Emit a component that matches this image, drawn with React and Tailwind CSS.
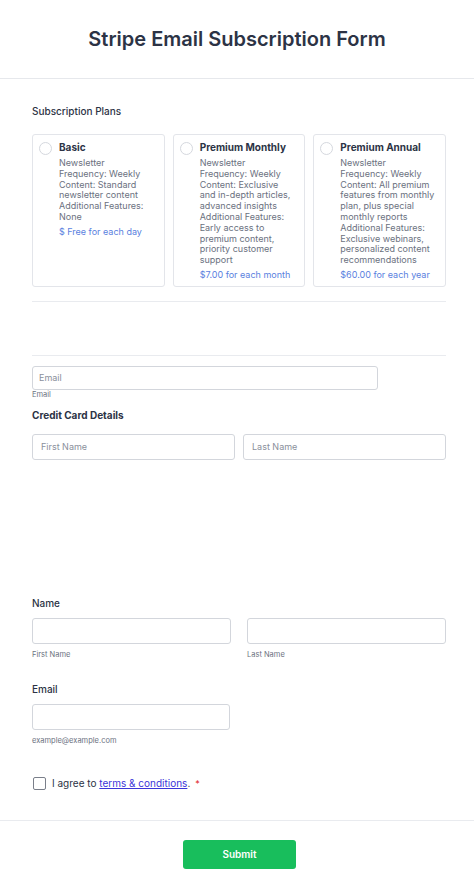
const plans = [
  {
    name: "Basic",
    lines: [
      "Newsletter",
      "Frequency: Weekly",
      "Content: Standard",
      "newsletter content",
      "Additional Features:",
      "None",
    ],
    price: "$ Free for each day",
  },
  {
    name: "Premium Monthly",
    lines: [
      "Newsletter",
      "Frequency: Weekly",
      "Content: Exclusive",
      "and in-depth articles,",
      "advanced insights",
      "Additional Features:",
      "Early access to",
      "premium content,",
      "priority customer",
      "support",
    ],
    price: "$7.00 for each month",
  },
  {
    name: "Premium Annual",
    lines: [
      "Newsletter",
      "Frequency: Weekly",
      "Content: All premium",
      "features from monthly",
      "plan, plus special",
      "monthly reports",
      "Additional Features:",
      "Exclusive webinars,",
      "personalized content",
      "recommendations",
    ],
    price: "$60.00 for each year",
  },
];

function PlanCard({ plan }) {
  return (
    <label className="flex gap-[7px] border border-[#e3e5ea] rounded-[3px] pt-[6px] pl-[6px] pr-[4px] pb-[6px]">
      <span className="mt-[1px] w-[13px] h-[13px] shrink-0 rounded-full border border-[#d5d8de] bg-white" />
      <div className="min-w-0">
        <div className="text-[10px] leading-[12px] font-bold text-[#2c3345]">
          {plan.name}
        </div>
        <div className="mt-[5px] text-[9px] leading-[10.8px] text-[#6b7180]">
          {plan.lines.map((l) => (
            <div key={l} className="whitespace-nowrap">
              {l}
            </div>
          ))}
        </div>
        <div className="mt-[3px] text-[9px] leading-[11px] text-[#5a7fe0] whitespace-nowrap">
          {plan.price}
        </div>
      </div>
    </label>
  );
}

function Input({ placeholder, className }) {
  return (
    <input
      placeholder={placeholder}
      className={`block border border-[#d3d6dc] rounded-[3px] bg-white text-[9px] text-[#2c3345] placeholder:text-[#8a909c] outline-none ${className}`}
    />
  );
}

export default function App() {
  return (
    <div className="min-h-[894px] bg-white font-['Inter',sans-serif] text-[#2c3345]">
      <div className="h-[79px] flex items-center justify-center border-b border-[#e6e8ec]">
        <h1 className="text-[20px] font-semibold text-[#2c3345]">
          Stripe Email Subscription Form
        </h1>
      </div>

      <div className="pl-8 pr-[28px]">
        <div className="mt-[25px] text-[10px] leading-[14px] font-medium">
          Subscription Plans
        </div>
        <div className="mt-[16px] grid grid-cols-3 gap-2">
          {plans.map((p) => (
            <PlanCard key={p.name} plan={p} />
          ))}
        </div>

        <div className="mt-[14px] border-t border-[#e9ebef]" />
        <div className="h-[53px]" />
        <div className="border-t border-[#e9ebef]" />

        <Input placeholder="Email" className="mt-[10px] w-[346px] h-[24px] pl-[6px] text-[9.5px]" />
        <div className="text-[7.5px] leading-[10px] text-[#6b7180]">Email</div>

        <div className="mt-[9px] text-[10px] leading-[12px] font-bold">
          Credit Card Details
        </div>
        <div className="mt-[13px] flex gap-2">
          <Input placeholder="First Name" className="flex-1 min-w-0 h-[26px] pl-[8px]" />
          <Input placeholder="Last Name" className="flex-1 min-w-0 h-[26px] pl-[8px]" />
        </div>

        <div className="mt-[137px] text-[10px] leading-[12px] font-medium">Name</div>
        <div className="mt-[9px] flex gap-4">
          <div className="flex-1">
            <Input className="w-full h-[26px]" />
            <div className="mt-[6px] text-[7.5px] leading-[10px] text-[#6b7180]">First Name</div>
          </div>
          <div className="flex-1">
            <Input className="w-full h-[26px]" />
            <div className="mt-[6px] text-[7.5px] leading-[10px] text-[#6b7180]">Last Name</div>
          </div>
        </div>

        <div className="mt-[23px] text-[10px] leading-[12px] font-medium">Email</div>
        <Input className="mt-[9px] w-[198px] h-[26px]" />
        <div className="mt-[6px] text-[7.5px] leading-[10px] text-[#6b7180]">
          example@example.com
        </div>

        <div className="mt-[31px] flex items-center gap-[6px] pl-[1px]">
          <span className="w-[13px] h-[13px] rounded-[2px] border-[1.5px] border-[#7a7f8a] bg-white" />
          <span className="text-[10px] leading-[13px] text-[#2c3345]">
            I agree to{" "}
            <a href="#" className="text-[#3b35d9] underline">
              terms &amp; conditions
            </a>
            .
            <span className="ml-[5px] text-[#e02424] align-top text-[9px]">*</span>
          </span>
        </div>
      </div>

      <div className="mt-[30px] border-t border-[#e9ebef] flex justify-center pt-[19px] pl-[5px]">
        <button className="w-[113px] h-[29px] rounded-[3px] bg-[#18be5c] text-white text-[10px] font-semibold">
          Submit
        </button>
      </div>
    </div>
  );
}
